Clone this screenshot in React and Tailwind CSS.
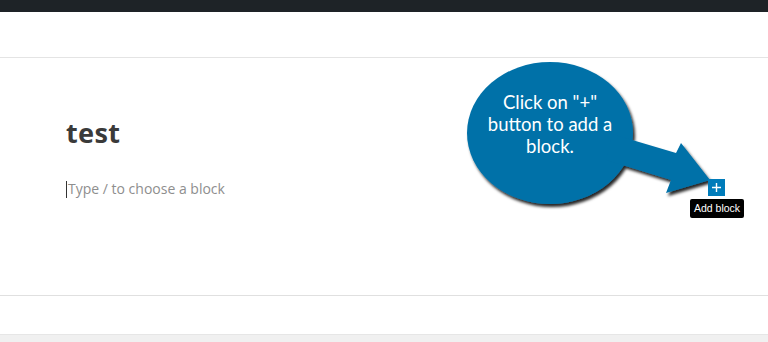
import React from "react";

const Callout = () => (
  <svg className="absolute left-0 top-0 pointer-events-none" width="768" height="342" viewBox="0 0 768 342">
    <defs>
      <filter id="shadow" x="-20%" y="-20%" width="140%" height="140%">
        <feDropShadow dx="2" dy="3" stdDeviation="1.8" floodColor="#000" floodOpacity="0.85" />
      </filter>
    </defs>
    <g filter="url(#shadow)" fill="#0071a8">
      <ellipse cx="550" cy="133" rx="83" ry="71" />
      <polygon points="612,134 676,153 681,143 710,180 666,193 671,180 606,160" />
    </g>
  </svg>
);

export default function App() {
  return (
    <div className="relative w-[768px] h-[342px] overflow-hidden bg-white" style={{ fontFamily: '"Open Sans", sans-serif' }}>
      <div className="h-[12px] bg-[#1e2327]" />
      <div className="h-[46px] border-b border-[#e4e4e4]" />
      <div className="relative h-[238px] border-b border-[#e0e0e0] pl-[66px] pt-[58px]">
        <h1 className="text-[27px] leading-[34px] font-bold text-[#3a3a3a] tracking-[0.3px]" style={{ fontFamily: '"Noto Sans", sans-serif' }}>
          test
        </h1>
        <div className="mt-[29px] flex items-center text-[14px] leading-[20px] text-[#8e8e8e]">
          <span className="w-px h-[17px] bg-[#333] mr-[1px]" />
          Type / to choose a block
        </div>
      </div>
      <div className="h-[38px]" />
      <div className="h-[8px] bg-[#f0f0f0] border-t border-[#e6e6e6]" />

      <Callout />

      <div className="absolute left-[470px] top-[91px] w-[160px] text-center text-white text-[18.5px] leading-[22px]" style={{ fontFamily: 'Lato, sans-serif' }}>
        Click on "+"<br />button to add a<br />block.
      </div>

      <button className="absolute left-[708px] top-[179px] w-[17px] h-[17px] bg-[#007cba] flex items-center justify-center">
        <svg width="11" height="11" viewBox="0 0 11 11">
          <path d="M5.5 1v9M1 5.5h9" stroke="#fff" strokeWidth="1.4" />
        </svg>
      </button>
      <div className="absolute left-[690px] top-[199px] w-[54px] h-[19px] bg-black rounded-[2px] text-white text-[10.5px] leading-[19px] text-center" style={{ fontFamily: '"Liberation Sans", sans-serif' }}>
        Add block
      </div>
    </div>
  );
}
